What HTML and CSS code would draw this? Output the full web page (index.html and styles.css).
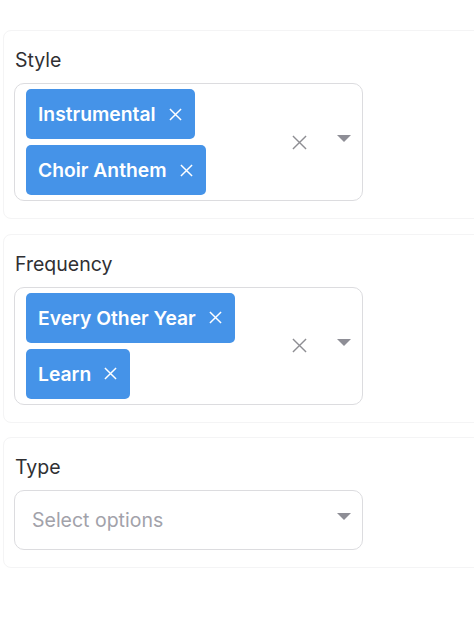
FILE: index.html
```html
<!DOCTYPE html>
<html>
<head>
  <meta charset="utf-8" />
  <meta name="viewport" content="width=device-width" />
  <title>Filters</title>
  <link rel="stylesheet" href="styles.css">
</head>

<body>
  <div class="filter-list">
    <div class="filter-card">
      <div class="filter-label">Style</div>
      <div class="multi-select">
        <div class="multi-tags">
          <span class="multi-tag">Instrumental
            <svg class="tag-x" viewBox="0 0 14 14"><path d="M1 1L13 13M13 1L1 13" /></svg>
          </span>
          <span class="multi-tag">Choir Anthem
            <svg class="tag-x" viewBox="0 0 14 14"><path d="M1 1L13 13M13 1L1 13" /></svg>
          </span>
        </div>
        <svg class="multi-clear" viewBox="0 0 16 16"><path d="M1 1L15 15M15 1L1 15" /></svg>
        <svg class="multi-caret" viewBox="0 0 14 8"><path d="M0 0H14L7 7Z" /></svg>
      </div>
    </div>

    <div class="filter-card">
      <div class="filter-label">Frequency</div>
      <div class="multi-select">
        <div class="multi-tags">
          <span class="multi-tag">Every Other Year
            <svg class="tag-x" viewBox="0 0 14 14"><path d="M1 1L13 13M13 1L1 13" /></svg>
          </span>
          <span class="multi-tag">Learn
            <svg class="tag-x" viewBox="0 0 14 14"><path d="M1 1L13 13M13 1L1 13" /></svg>
          </span>
        </div>
        <svg class="multi-clear" viewBox="0 0 16 16"><path d="M1 1L15 15M15 1L1 15" /></svg>
        <svg class="multi-caret" viewBox="0 0 14 8"><path d="M0 0H14L7 7Z" /></svg>
      </div>
    </div>

    <div class="filter-card">
      <div class="filter-label">Type</div>
      <div class="multi-select multi-empty">
        <div class="multi-placeholder">Select options</div>
        <svg class="multi-caret" viewBox="0 0 14 8"><path d="M0 0H14L7 7Z" /></svg>
      </div>
    </div>
  </div>
</body>
</html>
```

FILE: styles.css
```css
body {
  margin: 0;
  background-color: white;
  color: #333;
  font-family: Inter, 'Noto Sans', sans-serif;
  overflow: hidden;
}

.filter-list {
  padding-top: 30px;
  display: flex;
  flex-direction: column;
  gap: 14.5px;
}

.filter-card {
  margin-left: 3px;
  margin-right: -20px;
  border: 1px solid #f4f4f5;
  border-radius: 8px;
  padding: 17px 10px 17px 10px;
}

.filter-label {
  font-size: 19.5px;
  line-height: 24px;
  margin-left: 1px;
  margin-bottom: 11px;
  color: #303033;
}

.multi-select {
  width: 349px;
  box-sizing: border-box;
  border: 1px solid #dcdcdf;
  border-radius: 10px;
  padding: 5px 11px;
  display: flex;
  align-items: center;
}

.multi-tags {
  flex: 1;
  display: flex;
  flex-direction: column;
  align-items: flex-start;
  gap: 6px;
}

.multi-tag {
  height: 50px;
  box-sizing: border-box;
  padding: 0 13px 0 12px;
  background-color: #4593e8;
  color: white;
  border-radius: 5px;
  font-size: 19.3px;
  font-weight: 600;
  display: inline-flex;
  align-items: center;
  gap: 13px;
}

.tag-x {
  width: 13px;
  height: 13px;
  stroke: white;
  stroke-width: 1.6;
  fill: none;
}

.multi-clear {
  width: 15px;
  height: 15px;
  stroke: #8e8e93;
  stroke-width: 1.5;
  fill: none;
  margin-right: 30px;
}

.multi-caret {
  width: 14px;
  height: 8px;
  fill: #8e8e96;
  margin-bottom: 6px;
}

.multi-empty {
  height: 60px;
  padding: 0 11px 0 17px;
}

.multi-placeholder {
  flex: 1;
  font-size: 19.5px;
  color: #a2a2aa;
}
```
